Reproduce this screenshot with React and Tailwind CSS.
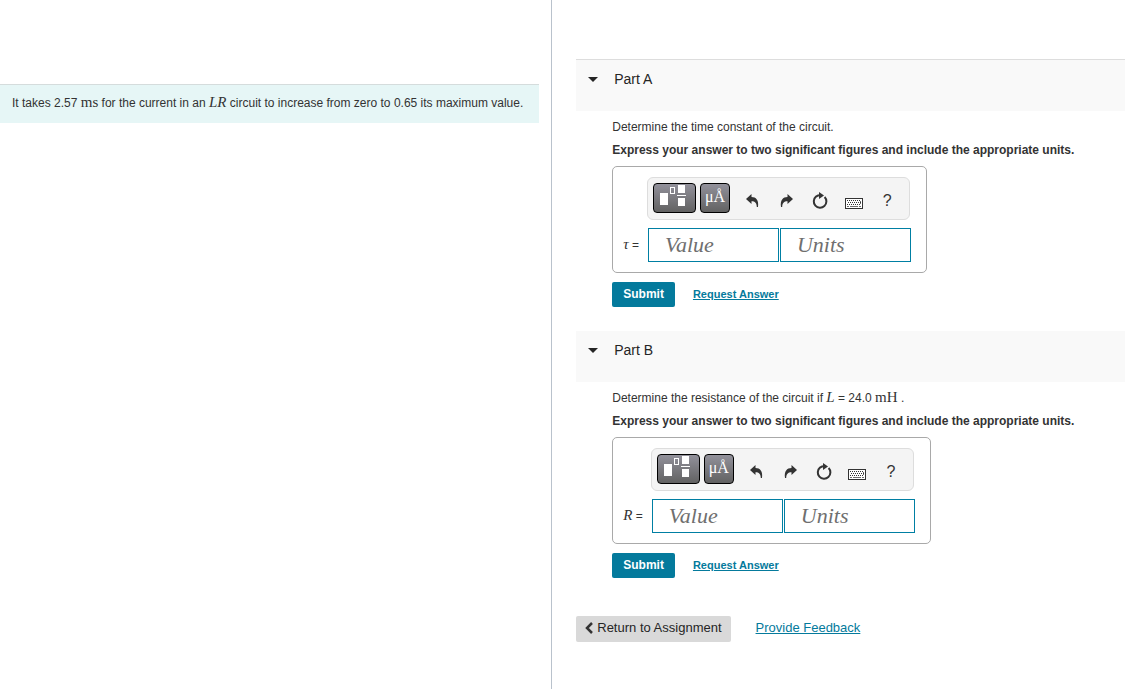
import React from "react";

const undoPath = "M0 5 L5.5 0 V3 C10 3 13 6 12 13 H10.8 C10.8 9 9 7.2 5.5 7.2 V10 Z";

function TemplatesIcon() {
  return (
    <svg width="28" height="24" viewBox="0 0 28 24" fill="#fff" aria-hidden="true">
      <rect x="-1" y="9" width="9" height="12" />
      <rect x="10.5" y="3.5" width="4" height="6" fill="none" stroke="#fff" />
      <rect x="18" y="1" width="7" height="8" />
      <rect x="17" y="11" width="9" height="1" />
      <rect x="18" y="14" width="7" height="8" />
    </svg>
  );
}

function UndoIcon() {
  return (
    <svg width="13" height="14" viewBox="0 0 13 14" fill="#333" aria-hidden="true">
      <path d={undoPath} />
    </svg>
  );
}

function RedoIcon() {
  return (
    <svg width="13" height="14" viewBox="0 0 13 14" fill="#333" aria-hidden="true">
      <path d={undoPath} transform="matrix(-1 0 0 1 13 0)" />
    </svg>
  );
}

function ResetIcon() {
  return (
    <svg width="16" height="18" viewBox="0 0 16 18" aria-hidden="true">
      <path d="M12.6 5 A6.3 6.3 0 1 1 4 4.6 Q6 3.3 8 3.3" fill="none" stroke="#333" strokeWidth="2" />
      <path d="M7 0 L12 3.4 L7 7 Z" fill="#333" />
    </svg>
  );
}

function KeyboardIcon() {
  return (
    <svg width="18" height="11" viewBox="0 0 18 11" fill="none" stroke="#333" aria-hidden="true">
      <rect x="0.5" y="0.5" width="17" height="10" fill="#fff" />
      <path d="M2 2.5 H16 M3 4.5 H16 M2 6.5 H16" strokeDasharray="1 1" />
      <path d="M2 8.5 H4 M5 8.5 H13 M14 8.5 H16 M15.5 3 V6" opacity="0.7" />
    </svg>
  );
}

const darkButton =
  "h-[30px] rounded-[4px] border border-black bg-gradient-to-b from-[#92919b] to-[#626262] flex justify-center text-white";

function Toolbar() {
  return (
    <div className="flex h-[43px] w-[263px] items-start rounded-md border border-[#ddd] bg-[#f4f4f4] px-[5px] pt-[5px]">
      <button aria-label="Templates" className={`${darkButton} w-[43px]`}>
        <TemplatesIcon />
      </button>
      <button aria-label="Symbols" className={`${darkButton} ml-1 w-[30px] font-['Liberation_Serif',serif] text-base leading-[26px]`}>
        μÅ
      </button>
      <div className="grid h-9 flex-1 grid-cols-5 place-items-center pl-[6px]">
        <button aria-label="Undo"><UndoIcon /></button>
        <button aria-label="Redo"><RedoIcon /></button>
        <button aria-label="Reset"><ResetIcon /></button>
        <button aria-label="Keyboard shortcuts" className="pt-1"><KeyboardIcon /></button>
        <button aria-label="Help" className="text-base text-[#333]">?</button>
      </div>
    </div>
  );
}

const inputClass =
  "h-[34px] w-[131px] border border-[#007fa3] bg-white px-4 font-['Liberation_Serif',serif] text-[22px] text-[#333] italic outline-none placeholder:text-[#6f6f6f]";

function AnswerBox({ symbol, id }) {
  return (
    <div className="mt-1 flex w-fit items-end rounded-[5px] border border-[#a9a9a9] pt-[10px] pr-[15px] pb-[10px] pl-[10px]">
      <label htmlFor={`${id}-value`} className="mr-2 leading-[34px]">
        <MathText>{symbol}</MathText> =
      </label>
      <div className="flex flex-col gap-2">
        <Toolbar />
        <div className="flex gap-px pl-px">
          <input id={`${id}-value`} placeholder="Value" className={inputClass} />
          <input aria-label="Units" placeholder="Units" className={inputClass} />
        </div>
      </div>
    </div>
  );
}

function MathText({ children, upright }) {
  return (
    <span className={`font-['Liberation_Serif',serif] text-[15px] leading-none ${upright ? "" : "italic"}`}>
      {children}
    </span>
  );
}

function Part({ title, symbol, id, first, children }) {
  return (
    <section className="mb-6">
      <header className={`flex h-[51px] items-start bg-[#f9f9f9] pl-3 ${first ? "box-content border-t border-[#ddd]" : ""}`}>
        <button aria-expanded="true" className="flex h-[38px] items-center text-sm text-[#252525]">
          <svg width="10" height="6" viewBox="0 0 10 6" className="mr-4" aria-hidden="true">
            <path d="M0 1 H10 L5 6 Z" fill="#252525" />
          </svg>
          <h2>{title}</h2>
        </button>
      </header>
      <div className="pt-[5px] pl-9">
        <p className="h-[23px] leading-[23px]">{children}</p>
        <p className="leading-[23px] font-bold">
          Express your answer to two significant figures and include the appropriate units.
        </p>
        <AnswerBox symbol={symbol} id={id} />
        <div className="mt-[9px] flex items-center">
          <button className="h-[25px] rounded-[2px] bg-[#047a9c] px-[11px] pb-px text-xs font-bold text-white">
            Submit
          </button>
          <a href="#" className="ml-[18px] text-[11px] font-bold text-[#047a9c] underline">
            Request Answer
          </a>
        </div>
      </div>
    </section>
  );
}

export default function App() {
  return (
    <div className="flex min-h-screen bg-white font-['Liberation_Sans',Arial,sans-serif] text-xs text-[#333]">
      <aside className="w-[49%] pt-[84px] pr-3">
        <div className="border-t border-[#d5dcdc] bg-[#e6f6f6] px-3 pt-[7px] pb-[9px]">
          <p className="h-[22px] leading-[22px]">
            It takes 2.57 <MathText upright>ms</MathText> for the current in an <MathText>LR</MathText> circuit to increase from zero to 0.65 its maximum value.
          </p>
        </div>
      </aside>
      <main className="flex-1 border-l border-[#b9c2cc] pt-[59px] pl-6">
        <Part title="Part A" symbol="τ" id="part-a" first>
          Determine the time constant of the circuit.
        </Part>
        <Part title="Part B" symbol="R" id="part-b">
          Determine the resistance of the circuit if <MathText>L</MathText> = 24.0 <MathText upright>mH</MathText> .
        </Part>
        <footer className="flex items-center pt-[14px] text-[13px]">
          <button className="flex h-[26px] items-center rounded-[2px] bg-[#d9d9d9] px-[9px] pb-[3px] text-[#252525]">
            <svg width="8" height="12" viewBox="0 0 8 12" className="mr-1" aria-hidden="true">
              <path d="M7 1 L2 6 L7 11" fill="none" stroke="#333" strokeWidth="2.5" />
            </svg>
            Return to Assignment
          </button>
          <a href="#" className="ml-[25px] pb-[2px] text-[#047a9c] underline">Provide Feedback</a>
        </footer>
      </main>
    </div>
  );
}
